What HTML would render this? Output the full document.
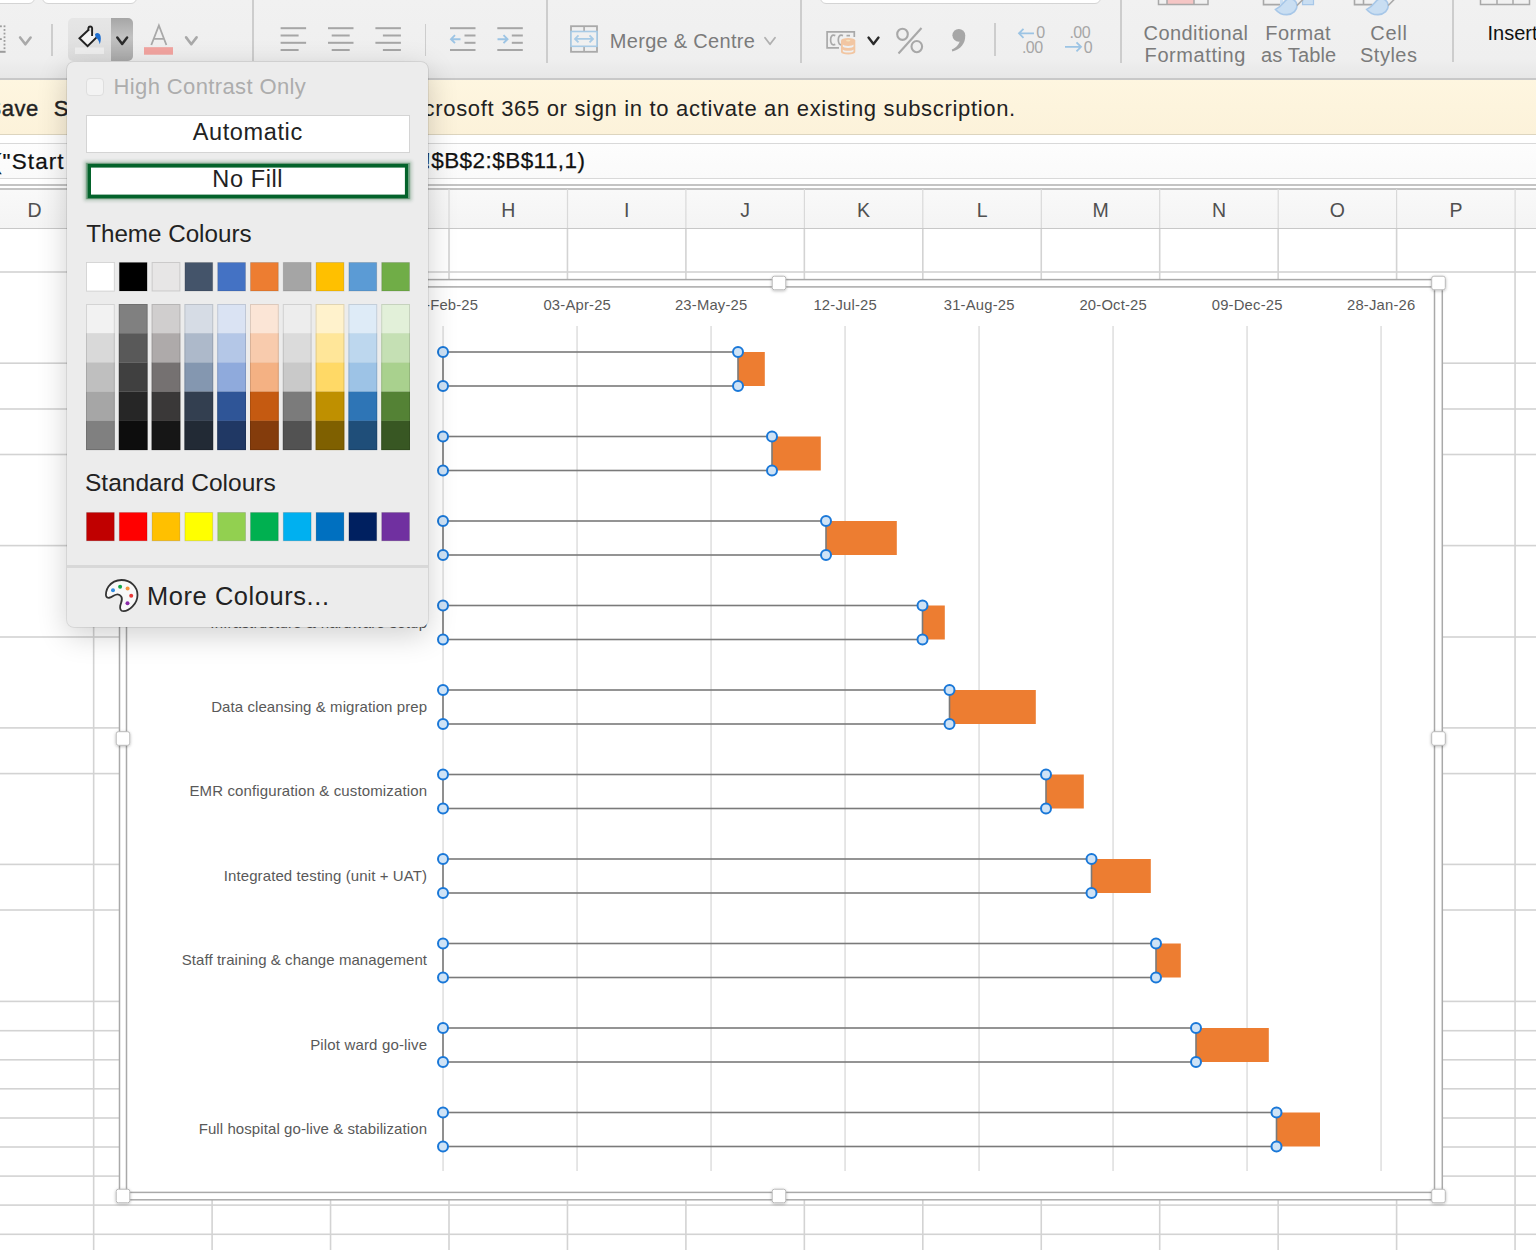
<!DOCTYPE html>
<html><head><meta charset="utf-8">
<style>
*{box-sizing:border-box;margin:0;padding:0}
html,body{width:1536px;height:1250px;overflow:hidden;background:#fff;font-family:"Liberation Sans", sans-serif;position:relative}
.a{position:absolute;white-space:pre}
</style></head><body>
<svg width="1536" height="1250" style="position:absolute;left:0;top:0">
<rect x="92.85" y="229" width="1.6" height="1021" fill="#d3d3d3"/>
<rect x="211.30" y="229" width="1.6" height="1021" fill="#d3d3d3"/>
<rect x="329.75" y="229" width="1.6" height="1021" fill="#d3d3d3"/>
<rect x="448.20" y="229" width="1.6" height="1021" fill="#d3d3d3"/>
<rect x="566.65" y="229" width="1.6" height="1021" fill="#d3d3d3"/>
<rect x="685.10" y="229" width="1.6" height="1021" fill="#d3d3d3"/>
<rect x="803.55" y="229" width="1.6" height="1021" fill="#d3d3d3"/>
<rect x="922.00" y="229" width="1.6" height="1021" fill="#d3d3d3"/>
<rect x="1040.45" y="229" width="1.6" height="1021" fill="#d3d3d3"/>
<rect x="1158.90" y="229" width="1.6" height="1021" fill="#d3d3d3"/>
<rect x="1277.35" y="229" width="1.6" height="1021" fill="#d3d3d3"/>
<rect x="1395.80" y="229" width="1.6" height="1021" fill="#d3d3d3"/>
<rect x="1514.25" y="229" width="1.6" height="1021" fill="#d3d3d3"/>
<rect x="0" y="271.20" width="1536" height="1.6" fill="#d3d3d3"/>
<rect x="0" y="362.40" width="1536" height="1.6" fill="#d3d3d3"/>
<rect x="0" y="408.20" width="1536" height="1.6" fill="#d3d3d3"/>
<rect x="0" y="453.70" width="1536" height="1.6" fill="#d3d3d3"/>
<rect x="0" y="544.80" width="1536" height="1.6" fill="#d3d3d3"/>
<rect x="0" y="636.20" width="1536" height="1.6" fill="#d3d3d3"/>
<rect x="0" y="727.10" width="1536" height="1.6" fill="#d3d3d3"/>
<rect x="0" y="772.80" width="1536" height="1.6" fill="#d3d3d3"/>
<rect x="0" y="863.60" width="1536" height="1.6" fill="#d3d3d3"/>
<rect x="0" y="909.20" width="1536" height="1.6" fill="#d3d3d3"/>
<rect x="0" y="1000.60" width="1536" height="1.6" fill="#d3d3d3"/>
<rect x="0" y="1029.90" width="1536" height="1.6" fill="#d3d3d3"/>
<rect x="0" y="1059.00" width="1536" height="1.6" fill="#d3d3d3"/>
<rect x="0" y="1088.00" width="1536" height="1.6" fill="#d3d3d3"/>
<rect x="0" y="1117.20" width="1536" height="1.6" fill="#d3d3d3"/>
<rect x="0" y="1146.20" width="1536" height="1.6" fill="#d3d3d3"/>
<rect x="0" y="1175.30" width="1536" height="1.6" fill="#d3d3d3"/>
<rect x="0" y="1204.30" width="1536" height="1.6" fill="#d3d3d3"/>
<rect x="0" y="1233.50" width="1536" height="1.6" fill="#d3d3d3"/>
</svg>
<div class="a" style="left:0;top:179px;width:1536px;height:10px;background:#fff;"></div>
<div class="a" style="left:0;top:184px;width:1536px;height:1.5px;background:#c4c4c4"></div>
<div class="a" style="left:0;top:188px;width:1536px;height:1.5px;background:#c4c4c4"></div>
<div class="a" style="left:0;top:189.5px;width:1536px;height:38.5px;background:linear-gradient(#f9f9f9,#f4f4f4)"></div>
<div class="a" style="left:0;top:227.5px;width:1536px;height:1.5px;background:#c8c8c8"></div>
<svg width="1536" height="50" style="position:absolute;left:0;top:189">
<rect x="93.1" y="0" width="1.2" height="39" fill="#d9d9d9"/>
<rect x="211.5" y="0" width="1.2" height="39" fill="#d9d9d9"/>
<rect x="329.9" y="0" width="1.2" height="39" fill="#d9d9d9"/>
<rect x="448.4" y="0" width="1.2" height="39" fill="#d9d9d9"/>
<rect x="566.9" y="0" width="1.2" height="39" fill="#d9d9d9"/>
<rect x="685.3" y="0" width="1.2" height="39" fill="#d9d9d9"/>
<rect x="803.8" y="0" width="1.2" height="39" fill="#d9d9d9"/>
<rect x="922.2" y="0" width="1.2" height="39" fill="#d9d9d9"/>
<rect x="1040.7" y="0" width="1.2" height="39" fill="#d9d9d9"/>
<rect x="1159.1" y="0" width="1.2" height="39" fill="#d9d9d9"/>
<rect x="1277.6" y="0" width="1.2" height="39" fill="#d9d9d9"/>
<rect x="1396.0" y="0" width="1.2" height="39" fill="#d9d9d9"/>
<rect x="1514.5" y="0" width="1.2" height="39" fill="#d9d9d9"/>
</svg>
<div class="a" style="left:4.5px;top:200px;width:60px;text-align:center;font-size:19.5px;line-height:20px;color:#505050">D</div>
<div class="a" style="left:122.9px;top:200px;width:60px;text-align:center;font-size:19.5px;line-height:20px;color:#505050">E</div>
<div class="a" style="left:241.4px;top:200px;width:60px;text-align:center;font-size:19.5px;line-height:20px;color:#505050">F</div>
<div class="a" style="left:359.8px;top:200px;width:60px;text-align:center;font-size:19.5px;line-height:20px;color:#505050">G</div>
<div class="a" style="left:478.2px;top:200px;width:60px;text-align:center;font-size:19.5px;line-height:20px;color:#505050">H</div>
<div class="a" style="left:596.7px;top:200px;width:60px;text-align:center;font-size:19.5px;line-height:20px;color:#505050">I</div>
<div class="a" style="left:715.2px;top:200px;width:60px;text-align:center;font-size:19.5px;line-height:20px;color:#505050">J</div>
<div class="a" style="left:833.6px;top:200px;width:60px;text-align:center;font-size:19.5px;line-height:20px;color:#505050">K</div>
<div class="a" style="left:952.1px;top:200px;width:60px;text-align:center;font-size:19.5px;line-height:20px;color:#505050">L</div>
<div class="a" style="left:1070.5px;top:200px;width:60px;text-align:center;font-size:19.5px;line-height:20px;color:#505050">M</div>
<div class="a" style="left:1189.0px;top:200px;width:60px;text-align:center;font-size:19.5px;line-height:20px;color:#505050">N</div>
<div class="a" style="left:1307.4px;top:200px;width:60px;text-align:center;font-size:19.5px;line-height:20px;color:#505050">O</div>
<div class="a" style="left:1425.9px;top:200px;width:60px;text-align:center;font-size:19.5px;line-height:20px;color:#505050">P</div>
<div class="a" style="left:1544.3px;top:200px;width:60px;text-align:center;font-size:19.5px;line-height:20px;color:#505050">Q</div>
<div class="a" style="left:0;top:135px;width:1536px;height:8px;background:#fff"></div>
<div class="a" style="left:0;top:143px;width:1536px;height:36px;background:linear-gradient(#fdfdfd,#fafafa);border-top:1.3px solid #d9d9d9;border-bottom:1.3px solid #d9d9d9"></div>
<div class="a" style="left:-6.00px;top:150.75px;font-size:22.5px;line-height:22.5px;color:#111;letter-spacing:1.1px;-webkit-text-stroke:0.25px #111">("Start</div>
<div class="a" style="left:411.50px;top:150.15px;font-size:22.5px;line-height:22.5px;color:#111;letter-spacing:0.45px;-webkit-text-stroke:0.25px #111">1!$B$2:$B$11,1)</div>
<div class="a" style="left:0;top:79px;width:1536px;height:56px;background:linear-gradient(#fef6e0,#fcf2da);border-bottom:1.5px solid #ddd5bf"></div>
<div class="a" style="left:-13.50px;top:98.08px;font-size:22px;line-height:22px;color:#222;letter-spacing:0.5px;-webkit-text-stroke:0.4px #222">Save</div>
<div class="a" style="left:53.80px;top:98.08px;font-size:22px;line-height:22px;color:#222;letter-spacing:0.5px;-webkit-text-stroke:0.4px #222">Subscribe</div>
<div class="a" style="left:399.00px;top:98.08px;font-size:22px;line-height:22px;color:#222;letter-spacing:0.68px;">Microsoft 365 or sign in to activate an existing subscription.</div>
<div class="a" style="left:0;top:0;width:1536px;height:79.5px;background:linear-gradient(#f1f1f1 0%,#efefef 75%,#e7e7e7 100%);border-bottom:2px solid #c8c8c8"></div>
<div class="a" style="left:-20px;top:-30px;width:55px;height:33.5px;background:#fff;border:1.2px solid #d4d4d4;border-radius:6px"></div>
<div class="a" style="left:42px;top:-30px;width:95px;height:33.5px;background:#fff;border:1.2px solid #d4d4d4;border-radius:6px"></div>
<div class="a" style="left:820px;top:-30px;width:281px;height:33.5px;background:#fff;border:1.2px solid #d4d4d4;border-radius:6px"></div>
<div class="a" style="left:51.4px;top:24px;width:1.3px;height:32px;background:#cdcdcd"></div>
<div class="a" style="left:252.4px;top:0px;width:1.3px;height:61px;background:#cdcdcd"></div>
<div class="a" style="left:424.9px;top:24px;width:1.3px;height:32px;background:#cdcdcd"></div>
<div class="a" style="left:546.4px;top:0px;width:1.3px;height:63px;background:#cdcdcd"></div>
<div class="a" style="left:800.4px;top:0px;width:1.3px;height:63px;background:#cdcdcd"></div>
<div class="a" style="left:994.4px;top:23px;width:1.3px;height:33px;background:#cdcdcd"></div>
<div class="a" style="left:1120.4px;top:0px;width:1.3px;height:63px;background:#cdcdcd"></div>
<div class="a" style="left:1452.4px;top:0px;width:1.3px;height:62px;background:#cdcdcd"></div>
<svg width="1536" height="79" style="position:absolute;left:0;top:0">
<g fill="#9c9c9c"><rect x="3.6" y="25.40" width="1.8" height="1.8"/><rect x="3.6" y="29.05" width="1.8" height="1.8"/><rect x="3.6" y="32.70" width="1.8" height="1.8"/><rect x="3.6" y="36.35" width="1.8" height="1.8"/><rect x="3.6" y="40.00" width="1.8" height="1.8"/><rect x="3.6" y="43.65" width="1.8" height="1.8"/><rect x="3.6" y="47.30" width="1.8" height="1.8"/><rect x="0" y="50.8" width="5.6" height="2"/><rect x="0" y="25.4" width="1.8" height="1.8"/><rect x="0" y="38.2" width="1.8" height="1.8"/></g>
<polyline points="20.1,37.5 25.4,44.3 30.6,37.5" fill="none" stroke="#a9a9a9" stroke-width="2.6" stroke-linecap="round" stroke-linejoin="round"/>
<polyline points="186.1,37.4 191.3,44.2 196.6,37.4" fill="none" stroke="#a9a9a9" stroke-width="2.6" stroke-linecap="round" stroke-linejoin="round"/>
<polyline points="765.0,37.8 770.0,44.2 775.0,37.8" fill="none" stroke="#b0b0b0" stroke-width="1.8" stroke-linecap="round" stroke-linejoin="round"/>
<polyline points="868.5,37.6 873.5,44.1 878.5,37.6" fill="none" stroke="#2a2a2a" stroke-width="2.4" stroke-linecap="round" stroke-linejoin="round"/>
<defs><linearGradient id="gb" x1="0" y1="0" x2="0" y2="1"><stop offset="0" stop-color="#a6a6a6"/><stop offset="0.45" stop-color="#c2c2c2"/><stop offset="1" stop-color="#a9a9a9"/></linearGradient><linearGradient id="gl" x1="0" y1="0" x2="0" y2="1"><stop offset="0" stop-color="#e6e6e6"/><stop offset="1" stop-color="#dddddd"/></linearGradient></defs>
<path d="M73,18 H111 V61 H73 A5,5 0 0 1 68,56 V23 A5,5 0 0 1 73,18Z" fill="url(#gl)"/>
<path d="M111,18 H128 A5,5 0 0 1 133,23 V56 A5,5 0 0 1 128,61 H111Z" fill="url(#gb)"/>
<rect x="75" y="47.5" width="29" height="6.5" fill="#eeeeee"/>
<path d="M88.4,30 L79.5,38.2 L87.6,46.2 L97.3,36.6" fill="#f4f4f4" stroke="#222" stroke-width="2" stroke-linejoin="miter"/>
<path d="M88.4,31 V28 A1.9,1.9 0 0 1 92.1,28 V36" fill="none" stroke="#222" stroke-width="1.9"/>
<path d="M95,34.2 C96.5,32.3 99.8,32.6 100.6,36.2 C101.2,39 100.6,41.8 99.7,44.3 C99.2,41.5 98.2,39 95.6,37.2 Z" fill="#1f6fd0"/>
<polyline points="117.3,37.6 122.2,43.9 127.1,37.6" fill="none" stroke="#2b2b2b" stroke-width="2.5" stroke-linecap="round" stroke-linejoin="round"/>
<path d="M151.3,45 L158.9,25.5 L166.4,45 M153.8,38.8 H164" fill="none" stroke="#a8a8a8" stroke-width="1.8"/>
<rect x="144" y="47.2" width="29" height="7.5" fill="#f2a4a0"/>
<rect x="280.6" y="27.2" width="25.5" height="2" fill="#a6a6a6"/><rect x="280.6" y="34.5" width="18" height="2" fill="#a6a6a6"/><rect x="280.6" y="41.8" width="25.5" height="2" fill="#a6a6a6"/><rect x="280.6" y="49.0" width="18" height="2" fill="#a6a6a6"/>
<rect x="328.0" y="27.2" width="25.5" height="2" fill="#a6a6a6"/><rect x="331.7" y="34.5" width="18" height="2" fill="#a6a6a6"/><rect x="328.0" y="41.8" width="25.5" height="2" fill="#a6a6a6"/><rect x="331.7" y="49.0" width="18" height="2" fill="#a6a6a6"/>
<rect x="375.4" y="27.2" width="25.5" height="2" fill="#a6a6a6"/><rect x="382.9" y="34.5" width="18" height="2" fill="#a6a6a6"/><rect x="375.4" y="41.8" width="25.5" height="2" fill="#a6a6a6"/><rect x="382.9" y="49.0" width="18" height="2" fill="#a6a6a6"/>
<rect x="450.0" y="27.2" width="25.5" height="2" fill="#a6a6a6"/><rect x="464.5" y="34.5" width="11" height="2" fill="#a6a6a6"/><rect x="464.5" y="41.8" width="11" height="2" fill="#a6a6a6"/><rect x="450.0" y="49.0" width="25.5" height="2" fill="#a6a6a6"/>
<path d="M460.5,39.2 H451 M455,35.2 L451,39.2 L455,43.2" fill="none" stroke="#9cc4e4" stroke-width="1.9"/>
<rect x="497.3" y="27.2" width="25.5" height="2" fill="#a6a6a6"/><rect x="511.8" y="34.5" width="11" height="2" fill="#a6a6a6"/><rect x="511.8" y="41.8" width="11" height="2" fill="#a6a6a6"/><rect x="497.3" y="49.0" width="25.5" height="2" fill="#a6a6a6"/>
<path d="M497.5,39.2 H507.5 M503.5,35.2 L507.5,39.2 L503.5,43.2" fill="none" stroke="#9cc4e4" stroke-width="1.9"/>
<rect x="571" y="26.2" width="26" height="25.6" fill="none" stroke="#a9a9a9" stroke-width="1.8"/>
<rect x="583.3" y="26" width="1.6" height="26" fill="#a9a9a9"/>
<rect x="571" y="31.5" width="26" height="14.8" fill="#f0f0f0" stroke="#a8cbe6" stroke-width="1.6"/>
<path d="M575,38.9 H593 M578.5,35.4 L575,38.9 L578.5,42.4 M589.5,35.4 L593,38.9 L589.5,42.4" fill="none" stroke="#a8cbe6" stroke-width="1.8"/>
<path d="M854.3,37 V31.9 H827.1 V47.9 H839" fill="none" stroke="#a9a9a9" stroke-width="1.7"/>
<path d="M835.3,35.6 C831.5,34 830.6,37.5 830.6,40 C830.6,42.5 831.5,46 835.3,44.4 M843,35.6 C839.2,34 838.3,37.5 838.3,40 C838.3,42.5 839.2,46 843,44.4 M846.5,35.6 H850" fill="none" stroke="#a9a9a9" stroke-width="1.7"/>
<path d="M841,40.6 A7.15,2.6 0 0 1 855.3,40.6 V52 A7.15,2.6 0 0 1 841,52 Z" fill="#f2c6a2"/>
<path d="M842.8,44.6 A5.4,1.5 0 0 0 853.5,44.6 V46.6 A5.4,1.5 0 0 1 842.8,46.6 Z M842.8,49.4 A5.4,1.5 0 0 0 853.5,49.4 V51.2 A5.4,1.5 0 0 1 842.8,51.2 Z" fill="#eef0f2"/>
<ellipse cx="848.2" cy="40.6" rx="2.2" ry="0.9" fill="#f5e2bd"/>
<g fill="none" stroke="#a8a8a8" stroke-width="2.1"><ellipse cx="902.5" cy="34.3" rx="5.3" ry="5.6"/><ellipse cx="916.8" cy="46.6" rx="5.3" ry="5.6"/><path d="M921.5,28 L898.5,53.5"/></g>
<circle cx="958.8" cy="35.3" r="6.4" fill="#a6a6a6"/><path d="M965.2,35.8 C965.5,43.5 960.5,49.5 952.3,51.6 L951.8,49.6 C956.5,47.5 959.5,44 959.8,40.5 Z" fill="#a6a6a6"/>
<text x="1036.3" y="37.8" font-family="Liberation Sans" font-size="16" fill="#a6a6a6">0</text>
<text x="1022" y="52.8" font-family="Liberation Sans" font-size="16" fill="#a6a6a6" letter-spacing="-0.6">.00</text>
<path d="M1034,33.3 H1019 M1023.5,28.8 L1019,33.3 L1023.5,37.8" fill="none" stroke="#9cc4e4" stroke-width="1.8"/>
<text x="1069.5" y="37.8" font-family="Liberation Sans" font-size="16" fill="#a6a6a6" letter-spacing="-0.6">.00</text>
<text x="1083.8" y="52.8" font-family="Liberation Sans" font-size="16" fill="#a6a6a6">0</text>
<path d="M1065,46.8 H1081 M1076.5,42.3 L1081,46.8 L1076.5,51.3" fill="none" stroke="#9cc4e4" stroke-width="1.8"/>
<rect x="1167" y="-10" width="27" height="14.6" fill="#f5c6c5"/><path d="M1158.5,-10 V4.6 H1208 V-10 M1194,-10 V4.6 M1167,-10 V4.6" fill="none" stroke="#a8a8a8" stroke-width="1.5"/>
<path d="M1263.5,-10 V4.6 H1280" fill="none" stroke="#a8a8a8" stroke-width="1.6"/><path d="M1303,-10 L1313.5,-10 L1313.5,4.6 L1302.5,4.6 Z" fill="#c9def2" stroke="#a7c7e8" stroke-width="1.2"/><path d="M1280,-10 H1283 V4.6 H1280Z" fill="#c9def2"/>
<path d="M1275.5,9.4 C1279,13.5 1283,14.8 1287,14.6 C1293,14.3 1297.5,10 1297,5 C1296.5,0.5 1292,-2 1288,-1 C1284,0 1283,6 1275.5,9.4 Z" fill="#c9def2" stroke="#a7c7e8" stroke-width="1.6"/><path d="M1297,5.5 L1303,-0.5" stroke="#a8a8a8" stroke-width="1.6"/>
<path d="M1354.5,-10 V4.6 H1372.5 M1363.5,-10 V4.6" fill="none" stroke="#a8a8a8" stroke-width="1.6"/>
<g transform="translate(91.2,0)"><path d="M1275.5,9.4 C1279,13.5 1283,14.8 1287,14.6 C1293,14.3 1297.5,10 1297,5 C1296.5,0.5 1292,-2 1288,-1 C1284,0 1283,6 1275.5,9.4 Z" fill="#c9def2" stroke="#a7c7e8" stroke-width="1.6"/><path d="M1297,5.5 L1303,-0.5" stroke="#a8a8a8" stroke-width="1.6"/></g>
<path d="M1480.5,-10 V4.6 H1529.5 V-10 M1497,-10 V4.6 M1513,-10 V4.6" fill="none" stroke="#a8a8a8" stroke-width="1.5"/>
</svg>
<div class="a" style="left:609.80px;top:30.57px;font-size:20px;line-height:20px;color:#7b7b7b;letter-spacing:0.3px;">Merge &amp; Centre</div>
<div class="a" style="left:1143.50px;top:23.07px;font-size:20px;line-height:20px;color:#7b7b7b;letter-spacing:0.44px;">Conditional</div>
<div class="a" style="left:1144.60px;top:44.97px;font-size:20px;line-height:20px;color:#7b7b7b;letter-spacing:0.58px;">Formatting</div>
<div class="a" style="left:1265.30px;top:23.07px;font-size:20px;line-height:20px;color:#7b7b7b;letter-spacing:0.4px;">Format</div>
<div class="a" style="left:1261.00px;top:44.97px;font-size:20px;line-height:20px;color:#7b7b7b;letter-spacing:0.15px;">as Table</div>
<div class="a" style="left:1370.30px;top:23.07px;font-size:20px;line-height:20px;color:#7b7b7b;letter-spacing:0.7px;">Cell</div>
<div class="a" style="left:1360.00px;top:44.97px;font-size:20px;line-height:20px;color:#7b7b7b;letter-spacing:0.5px;">Styles</div>
<div class="a" style="left:1487.50px;top:23.07px;font-size:20px;line-height:20px;color:#111;">Insert</div>
<svg width="1536" height="1250" style="position:absolute;left:0;top:0"><defs><filter id="hs" x="-50%" y="-50%" width="200%" height="200%"><feDropShadow dx="0" dy="0.8" stdDeviation="1.4" flood-color="#000" flood-opacity="0.28"/></filter></defs>
<rect x="119.5" y="279.6" width="1322.8" height="920.2" fill="#fff" stroke="#a9a9a9" stroke-width="1.5"/>
<rect x="126.5" y="286.9" width="1308" height="905.5" fill="#fff" stroke="#a9a9a9" stroke-width="1.5"/>
<rect x="442.4" y="326" width="1.3" height="845" fill="#d9d9d9"/>
<rect x="576.4" y="326" width="1.3" height="845" fill="#d9d9d9"/>
<rect x="710.4" y="326" width="1.3" height="845" fill="#d9d9d9"/>
<rect x="844.4" y="326" width="1.3" height="845" fill="#d9d9d9"/>
<rect x="978.4" y="326" width="1.3" height="845" fill="#d9d9d9"/>
<rect x="1112.4" y="326" width="1.3" height="845" fill="#d9d9d9"/>
<rect x="1246.4" y="326" width="1.3" height="845" fill="#d9d9d9"/>
<rect x="1380.4" y="326" width="1.3" height="845" fill="#d9d9d9"/>
<text x="443.2" y="310.3" text-anchor="middle" font-family="Liberation Sans" font-size="14.8" fill="#595959" letter-spacing="0.2">12-Feb-25</text>
<text x="577.2" y="310.3" text-anchor="middle" font-family="Liberation Sans" font-size="14.8" fill="#595959" letter-spacing="0.2">03-Apr-25</text>
<text x="711.2" y="310.3" text-anchor="middle" font-family="Liberation Sans" font-size="14.8" fill="#595959" letter-spacing="0.2">23-May-25</text>
<text x="845.2" y="310.3" text-anchor="middle" font-family="Liberation Sans" font-size="14.8" fill="#595959" letter-spacing="0.2">12-Jul-25</text>
<text x="979.2" y="310.3" text-anchor="middle" font-family="Liberation Sans" font-size="14.8" fill="#595959" letter-spacing="0.2">31-Aug-25</text>
<text x="1113.2" y="310.3" text-anchor="middle" font-family="Liberation Sans" font-size="14.8" fill="#595959" letter-spacing="0.2">20-Oct-25</text>
<text x="1247.2" y="310.3" text-anchor="middle" font-family="Liberation Sans" font-size="14.8" fill="#595959" letter-spacing="0.2">09-Dec-25</text>
<text x="1381.2" y="310.3" text-anchor="middle" font-family="Liberation Sans" font-size="14.8" fill="#595959" letter-spacing="0.2">28-Jan-26</text>
<rect x="738.0" y="352.0" width="26.8" height="34" fill="#ed7d31"/>
<rect x="443" y="352.0" width="295.0" height="34" fill="none" stroke="#7a7a7a" stroke-width="1.6"/>
<circle cx="443.0" cy="352.0" r="5" fill="#cfe3f6" stroke="#1a78d8" stroke-width="2"/>
<circle cx="738.0" cy="352.0" r="5" fill="#cfe3f6" stroke="#1a78d8" stroke-width="2"/>
<circle cx="443.0" cy="386.0" r="5" fill="#cfe3f6" stroke="#1a78d8" stroke-width="2"/>
<circle cx="738.0" cy="386.0" r="5" fill="#cfe3f6" stroke="#1a78d8" stroke-width="2"/>
<text x="427.1" y="373.6" text-anchor="end" font-family="Liberation Sans" font-size="15" fill="#595959" letter-spacing="0.1">Scope definition &amp; requirements</text>
<rect x="772.0" y="436.5" width="48.8" height="34" fill="#ed7d31"/>
<rect x="443" y="436.5" width="329.0" height="34" fill="none" stroke="#7a7a7a" stroke-width="1.6"/>
<circle cx="443.0" cy="436.5" r="5" fill="#cfe3f6" stroke="#1a78d8" stroke-width="2"/>
<circle cx="772.0" cy="436.5" r="5" fill="#cfe3f6" stroke="#1a78d8" stroke-width="2"/>
<circle cx="443.0" cy="470.5" r="5" fill="#cfe3f6" stroke="#1a78d8" stroke-width="2"/>
<circle cx="772.0" cy="470.5" r="5" fill="#cfe3f6" stroke="#1a78d8" stroke-width="2"/>
<text x="427.1" y="458.1" text-anchor="end" font-family="Liberation Sans" font-size="15" fill="#595959" letter-spacing="0.1">Vendor selection &amp; contracting</text>
<rect x="826.0" y="521.0" width="70.8" height="34" fill="#ed7d31"/>
<rect x="443" y="521.0" width="383.0" height="34" fill="none" stroke="#7a7a7a" stroke-width="1.6"/>
<circle cx="443.0" cy="521.0" r="5" fill="#cfe3f6" stroke="#1a78d8" stroke-width="2"/>
<circle cx="826.0" cy="521.0" r="5" fill="#cfe3f6" stroke="#1a78d8" stroke-width="2"/>
<circle cx="443.0" cy="555.0" r="5" fill="#cfe3f6" stroke="#1a78d8" stroke-width="2"/>
<circle cx="826.0" cy="555.0" r="5" fill="#cfe3f6" stroke="#1a78d8" stroke-width="2"/>
<text x="427.1" y="542.6" text-anchor="end" font-family="Liberation Sans" font-size="15" fill="#595959" letter-spacing="0.1">Project planning &amp; governance</text>
<rect x="922.5" y="605.5" width="22.3" height="34" fill="#ed7d31"/>
<rect x="443" y="605.5" width="479.5" height="34" fill="none" stroke="#7a7a7a" stroke-width="1.6"/>
<circle cx="443.0" cy="605.5" r="5" fill="#cfe3f6" stroke="#1a78d8" stroke-width="2"/>
<circle cx="922.5" cy="605.5" r="5" fill="#cfe3f6" stroke="#1a78d8" stroke-width="2"/>
<circle cx="443.0" cy="639.5" r="5" fill="#cfe3f6" stroke="#1a78d8" stroke-width="2"/>
<circle cx="922.5" cy="639.5" r="5" fill="#cfe3f6" stroke="#1a78d8" stroke-width="2"/>
<text x="427.22" y="628.4" text-anchor="end" font-family="Liberation Sans" font-size="15" fill="#595959" letter-spacing="0.22">Infrastructure &amp; hardware setup</text>
<rect x="949.5" y="690.0" width="86.3" height="34" fill="#ed7d31"/>
<rect x="443" y="690.0" width="506.5" height="34" fill="none" stroke="#7a7a7a" stroke-width="1.6"/>
<circle cx="443.0" cy="690.0" r="5" fill="#cfe3f6" stroke="#1a78d8" stroke-width="2"/>
<circle cx="949.5" cy="690.0" r="5" fill="#cfe3f6" stroke="#1a78d8" stroke-width="2"/>
<circle cx="443.0" cy="724.0" r="5" fill="#cfe3f6" stroke="#1a78d8" stroke-width="2"/>
<circle cx="949.5" cy="724.0" r="5" fill="#cfe3f6" stroke="#1a78d8" stroke-width="2"/>
<text x="427.08" y="711.6" text-anchor="end" font-family="Liberation Sans" font-size="15" fill="#595959" letter-spacing="0.08">Data cleansing &amp; migration prep</text>
<rect x="1046.0" y="774.5" width="37.8" height="34" fill="#ed7d31"/>
<rect x="443" y="774.5" width="603.0" height="34" fill="none" stroke="#7a7a7a" stroke-width="1.6"/>
<circle cx="443.0" cy="774.5" r="5" fill="#cfe3f6" stroke="#1a78d8" stroke-width="2"/>
<circle cx="1046.0" cy="774.5" r="5" fill="#cfe3f6" stroke="#1a78d8" stroke-width="2"/>
<circle cx="443.0" cy="808.5" r="5" fill="#cfe3f6" stroke="#1a78d8" stroke-width="2"/>
<circle cx="1046.0" cy="808.5" r="5" fill="#cfe3f6" stroke="#1a78d8" stroke-width="2"/>
<text x="427.13" y="796.1" text-anchor="end" font-family="Liberation Sans" font-size="15" fill="#595959" letter-spacing="0.13">EMR configuration &amp; customization</text>
<rect x="1091.5" y="859.0" width="59.3" height="34" fill="#ed7d31"/>
<rect x="443" y="859.0" width="648.5" height="34" fill="none" stroke="#7a7a7a" stroke-width="1.6"/>
<circle cx="443.0" cy="859.0" r="5" fill="#cfe3f6" stroke="#1a78d8" stroke-width="2"/>
<circle cx="1091.5" cy="859.0" r="5" fill="#cfe3f6" stroke="#1a78d8" stroke-width="2"/>
<circle cx="443.0" cy="893.0" r="5" fill="#cfe3f6" stroke="#1a78d8" stroke-width="2"/>
<circle cx="1091.5" cy="893.0" r="5" fill="#cfe3f6" stroke="#1a78d8" stroke-width="2"/>
<text x="427.1" y="880.6" text-anchor="end" font-family="Liberation Sans" font-size="15" fill="#595959" letter-spacing="0.1">Integrated testing (unit + UAT)</text>
<rect x="1156.0" y="943.5" width="24.8" height="34" fill="#ed7d31"/>
<rect x="443" y="943.5" width="713.0" height="34" fill="none" stroke="#7a7a7a" stroke-width="1.6"/>
<circle cx="443.0" cy="943.5" r="5" fill="#cfe3f6" stroke="#1a78d8" stroke-width="2"/>
<circle cx="1156.0" cy="943.5" r="5" fill="#cfe3f6" stroke="#1a78d8" stroke-width="2"/>
<circle cx="443.0" cy="977.5" r="5" fill="#cfe3f6" stroke="#1a78d8" stroke-width="2"/>
<circle cx="1156.0" cy="977.5" r="5" fill="#cfe3f6" stroke="#1a78d8" stroke-width="2"/>
<text x="427.06" y="965.1" text-anchor="end" font-family="Liberation Sans" font-size="15" fill="#595959" letter-spacing="0.06">Staff training &amp; change management</text>
<rect x="1196.0" y="1028.0" width="72.8" height="34" fill="#ed7d31"/>
<rect x="443" y="1028.0" width="753.0" height="34" fill="none" stroke="#7a7a7a" stroke-width="1.6"/>
<circle cx="443.0" cy="1028.0" r="5" fill="#cfe3f6" stroke="#1a78d8" stroke-width="2"/>
<circle cx="1196.0" cy="1028.0" r="5" fill="#cfe3f6" stroke="#1a78d8" stroke-width="2"/>
<circle cx="443.0" cy="1062.0" r="5" fill="#cfe3f6" stroke="#1a78d8" stroke-width="2"/>
<circle cx="1196.0" cy="1062.0" r="5" fill="#cfe3f6" stroke="#1a78d8" stroke-width="2"/>
<text x="427.15" y="1049.6" text-anchor="end" font-family="Liberation Sans" font-size="15" fill="#595959" letter-spacing="0.15">Pilot ward go-live</text>
<rect x="1276.5" y="1112.5" width="43.5" height="34" fill="#ed7d31"/>
<rect x="443" y="1112.5" width="833.5" height="34" fill="none" stroke="#7a7a7a" stroke-width="1.6"/>
<circle cx="443.0" cy="1112.5" r="5" fill="#cfe3f6" stroke="#1a78d8" stroke-width="2"/>
<circle cx="1276.5" cy="1112.5" r="5" fill="#cfe3f6" stroke="#1a78d8" stroke-width="2"/>
<circle cx="443.0" cy="1146.5" r="5" fill="#cfe3f6" stroke="#1a78d8" stroke-width="2"/>
<circle cx="1276.5" cy="1146.5" r="5" fill="#cfe3f6" stroke="#1a78d8" stroke-width="2"/>
<text x="427.09" y="1134.1" text-anchor="end" font-family="Liberation Sans" font-size="15" fill="#595959" letter-spacing="0.09">Full hospital go-live &amp; stabilization</text>
<rect x="116.2" y="276.2" width="13.6" height="13.6" rx="2.2" fill="#fff" stroke="#b9b9b9" stroke-width="1" filter="url(#hs)"/>
<rect x="772.2" y="276.2" width="13.6" height="13.6" rx="2.2" fill="#fff" stroke="#b9b9b9" stroke-width="1" filter="url(#hs)"/>
<rect x="1431.7" y="276.2" width="13.6" height="13.6" rx="2.2" fill="#fff" stroke="#b9b9b9" stroke-width="1" filter="url(#hs)"/>
<rect x="116.2" y="731.7" width="13.6" height="13.6" rx="2.2" fill="#fff" stroke="#b9b9b9" stroke-width="1" filter="url(#hs)"/>
<rect x="1431.7" y="731.7" width="13.6" height="13.6" rx="2.2" fill="#fff" stroke="#b9b9b9" stroke-width="1" filter="url(#hs)"/>
<rect x="116.2" y="1189.2" width="13.6" height="13.6" rx="2.2" fill="#fff" stroke="#b9b9b9" stroke-width="1" filter="url(#hs)"/>
<rect x="772.2" y="1189.2" width="13.6" height="13.6" rx="2.2" fill="#fff" stroke="#b9b9b9" stroke-width="1" filter="url(#hs)"/>
<rect x="1431.7" y="1189.2" width="13.6" height="13.6" rx="2.2" fill="#fff" stroke="#b9b9b9" stroke-width="1" filter="url(#hs)"/>
</svg>
<div class="a" style="left:67px;top:62px;width:361px;height:564.5px;background:#ececec;border-radius:7px;box-shadow:0 8px 30px rgba(0,0,0,0.19),0 0 0 0.8px rgba(0,0,0,0.10)"></div>
<div class="a" style="left:86px;top:78px;width:17.6px;height:18.4px;border-radius:4px;background:#f3f3f3;border:1px solid #dedede"></div>
<div class="a" style="left:113.50px;top:76.48px;font-size:22px;line-height:22px;color:#adadad;letter-spacing:0.38px;">High Contrast Only</div>
<div class="a" style="left:86px;top:115px;width:323.5px;height:37.8px;background:#fff;border:1.5px solid #d4d4d4"></div>
<div class="a" style="left:86.00px;top:121.01px;font-size:23.5px;line-height:23.5px;color:#222;letter-spacing:0.64px;width:323.5px;text-align:center;">Automatic</div>
<div class="a" style="left:87.3px;top:163.9px;width:321.3px;height:34.4px;background:#fff;box-shadow:0 0 0 1.2px rgba(70,130,90,0.55),0 0 3px 3px rgba(60,120,80,0.28)"></div>
<svg width="340" height="50" style="position:absolute;left:80px;top:155px"><rect x="9.15" y="10.75" width="317.6" height="30.7" fill="none" stroke="#04632b" stroke-width="3.7"/></svg>
<div class="a" style="left:86.00px;top:168.41px;font-size:23.5px;line-height:23.5px;color:#222;letter-spacing:0.6px;width:323.5px;text-align:center;">No Fill</div>
<div class="a" style="left:86.20px;top:221.71px;font-size:24.2px;line-height:24.2px;color:#222;">Theme Colours</div>
<svg width="361" height="300" style="position:absolute;left:67px;top:250px">
<rect x="19.5" y="12.5" width="27.8" height="28.5" fill="#FFFFFF" stroke="rgba(0,0,0,0.13)" stroke-width="1"/>
<rect x="52.3" y="12.5" width="27.8" height="28.5" fill="#000000" stroke="rgba(0,0,0,0.13)" stroke-width="1"/>
<rect x="85.1" y="12.5" width="27.8" height="28.5" fill="#E7E6E6" stroke="rgba(0,0,0,0.13)" stroke-width="1"/>
<rect x="117.9" y="12.5" width="27.8" height="28.5" fill="#44546A" stroke="rgba(0,0,0,0.13)" stroke-width="1"/>
<rect x="150.7" y="12.5" width="27.8" height="28.5" fill="#4472C4" stroke="rgba(0,0,0,0.13)" stroke-width="1"/>
<rect x="183.5" y="12.5" width="27.8" height="28.5" fill="#ED7D31" stroke="rgba(0,0,0,0.13)" stroke-width="1"/>
<rect x="216.3" y="12.5" width="27.8" height="28.5" fill="#A5A5A5" stroke="rgba(0,0,0,0.13)" stroke-width="1"/>
<rect x="249.1" y="12.5" width="27.8" height="28.5" fill="#FFC000" stroke="rgba(0,0,0,0.13)" stroke-width="1"/>
<rect x="281.9" y="12.5" width="27.8" height="28.5" fill="#5B9BD5" stroke="rgba(0,0,0,0.13)" stroke-width="1"/>
<rect x="314.7" y="12.5" width="27.8" height="28.5" fill="#70AD47" stroke="rgba(0,0,0,0.13)" stroke-width="1"/>
<rect x="19.0" y="54.0" width="28.8" height="29.3" fill="#F2F2F2"/>
<rect x="19.0" y="83.2" width="28.8" height="29.3" fill="#D9D9D9"/>
<rect x="19.0" y="112.4" width="28.8" height="29.3" fill="#BFBFBF"/>
<rect x="19.0" y="141.6" width="28.8" height="29.3" fill="#A6A6A6"/>
<rect x="19.0" y="170.8" width="28.8" height="29.3" fill="#808080"/>
<rect x="19.5" y="54.5" width="27.8" height="145" fill="none" stroke="rgba(0,0,0,0.12)" stroke-width="1"/>
<rect x="51.8" y="54.0" width="28.8" height="29.3" fill="#808080"/>
<rect x="51.8" y="83.2" width="28.8" height="29.3" fill="#595959"/>
<rect x="51.8" y="112.4" width="28.8" height="29.3" fill="#404040"/>
<rect x="51.8" y="141.6" width="28.8" height="29.3" fill="#262626"/>
<rect x="51.8" y="170.8" width="28.8" height="29.3" fill="#0D0D0D"/>
<rect x="52.3" y="54.5" width="27.8" height="145" fill="none" stroke="rgba(0,0,0,0.12)" stroke-width="1"/>
<rect x="84.6" y="54.0" width="28.8" height="29.3" fill="#D0CECE"/>
<rect x="84.6" y="83.2" width="28.8" height="29.3" fill="#AEAAAA"/>
<rect x="84.6" y="112.4" width="28.8" height="29.3" fill="#757171"/>
<rect x="84.6" y="141.6" width="28.8" height="29.3" fill="#3A3838"/>
<rect x="84.6" y="170.8" width="28.8" height="29.3" fill="#161616"/>
<rect x="85.1" y="54.5" width="27.8" height="145" fill="none" stroke="rgba(0,0,0,0.12)" stroke-width="1"/>
<rect x="117.4" y="54.0" width="28.8" height="29.3" fill="#D6DCE5"/>
<rect x="117.4" y="83.2" width="28.8" height="29.3" fill="#ADB9CA"/>
<rect x="117.4" y="112.4" width="28.8" height="29.3" fill="#8497B0"/>
<rect x="117.4" y="141.6" width="28.8" height="29.3" fill="#333F50"/>
<rect x="117.4" y="170.8" width="28.8" height="29.3" fill="#222A35"/>
<rect x="117.9" y="54.5" width="27.8" height="145" fill="none" stroke="rgba(0,0,0,0.12)" stroke-width="1"/>
<rect x="150.2" y="54.0" width="28.8" height="29.3" fill="#DAE3F3"/>
<rect x="150.2" y="83.2" width="28.8" height="29.3" fill="#B4C7E7"/>
<rect x="150.2" y="112.4" width="28.8" height="29.3" fill="#8FAADC"/>
<rect x="150.2" y="141.6" width="28.8" height="29.3" fill="#2F5597"/>
<rect x="150.2" y="170.8" width="28.8" height="29.3" fill="#203864"/>
<rect x="150.7" y="54.5" width="27.8" height="145" fill="none" stroke="rgba(0,0,0,0.12)" stroke-width="1"/>
<rect x="183.0" y="54.0" width="28.8" height="29.3" fill="#FBE5D6"/>
<rect x="183.0" y="83.2" width="28.8" height="29.3" fill="#F8CBAD"/>
<rect x="183.0" y="112.4" width="28.8" height="29.3" fill="#F4B183"/>
<rect x="183.0" y="141.6" width="28.8" height="29.3" fill="#C55A11"/>
<rect x="183.0" y="170.8" width="28.8" height="29.3" fill="#843C0C"/>
<rect x="183.5" y="54.5" width="27.8" height="145" fill="none" stroke="rgba(0,0,0,0.12)" stroke-width="1"/>
<rect x="215.8" y="54.0" width="28.8" height="29.3" fill="#EDEDED"/>
<rect x="215.8" y="83.2" width="28.8" height="29.3" fill="#DBDBDB"/>
<rect x="215.8" y="112.4" width="28.8" height="29.3" fill="#C9C9C9"/>
<rect x="215.8" y="141.6" width="28.8" height="29.3" fill="#7B7B7B"/>
<rect x="215.8" y="170.8" width="28.8" height="29.3" fill="#525252"/>
<rect x="216.3" y="54.5" width="27.8" height="145" fill="none" stroke="rgba(0,0,0,0.12)" stroke-width="1"/>
<rect x="248.6" y="54.0" width="28.8" height="29.3" fill="#FFF2CC"/>
<rect x="248.6" y="83.2" width="28.8" height="29.3" fill="#FFE699"/>
<rect x="248.6" y="112.4" width="28.8" height="29.3" fill="#FFD966"/>
<rect x="248.6" y="141.6" width="28.8" height="29.3" fill="#BF9000"/>
<rect x="248.6" y="170.8" width="28.8" height="29.3" fill="#7F6000"/>
<rect x="249.1" y="54.5" width="27.8" height="145" fill="none" stroke="rgba(0,0,0,0.12)" stroke-width="1"/>
<rect x="281.4" y="54.0" width="28.8" height="29.3" fill="#DEEBF7"/>
<rect x="281.4" y="83.2" width="28.8" height="29.3" fill="#BDD7EE"/>
<rect x="281.4" y="112.4" width="28.8" height="29.3" fill="#9DC3E6"/>
<rect x="281.4" y="141.6" width="28.8" height="29.3" fill="#2E75B6"/>
<rect x="281.4" y="170.8" width="28.8" height="29.3" fill="#1F4E79"/>
<rect x="281.9" y="54.5" width="27.8" height="145" fill="none" stroke="rgba(0,0,0,0.12)" stroke-width="1"/>
<rect x="314.2" y="54.0" width="28.8" height="29.3" fill="#E2F0D9"/>
<rect x="314.2" y="83.2" width="28.8" height="29.3" fill="#C5E0B4"/>
<rect x="314.2" y="112.4" width="28.8" height="29.3" fill="#A9D18E"/>
<rect x="314.2" y="141.6" width="28.8" height="29.3" fill="#548235"/>
<rect x="314.2" y="170.8" width="28.8" height="29.3" fill="#385723"/>
<rect x="314.7" y="54.5" width="27.8" height="145" fill="none" stroke="rgba(0,0,0,0.12)" stroke-width="1"/>
<rect x="19.5" y="262.5" width="27.8" height="28.3" fill="#C00000" stroke="rgba(0,0,0,0.13)" stroke-width="1"/>
<rect x="52.3" y="262.5" width="27.8" height="28.3" fill="#FF0000" stroke="rgba(0,0,0,0.13)" stroke-width="1"/>
<rect x="85.1" y="262.5" width="27.8" height="28.3" fill="#FFC000" stroke="rgba(0,0,0,0.13)" stroke-width="1"/>
<rect x="117.9" y="262.5" width="27.8" height="28.3" fill="#FFFF00" stroke="rgba(0,0,0,0.13)" stroke-width="1"/>
<rect x="150.7" y="262.5" width="27.8" height="28.3" fill="#92D050" stroke="rgba(0,0,0,0.13)" stroke-width="1"/>
<rect x="183.5" y="262.5" width="27.8" height="28.3" fill="#00B050" stroke="rgba(0,0,0,0.13)" stroke-width="1"/>
<rect x="216.3" y="262.5" width="27.8" height="28.3" fill="#00B0F0" stroke="rgba(0,0,0,0.13)" stroke-width="1"/>
<rect x="249.1" y="262.5" width="27.8" height="28.3" fill="#0070C0" stroke="rgba(0,0,0,0.13)" stroke-width="1"/>
<rect x="281.9" y="262.5" width="27.8" height="28.3" fill="#002060" stroke="rgba(0,0,0,0.13)" stroke-width="1"/>
<rect x="314.7" y="262.5" width="27.8" height="28.3" fill="#7030A0" stroke="rgba(0,0,0,0.13)" stroke-width="1"/>
</svg>
<div class="a" style="left:85.00px;top:471.46px;font-size:24.5px;line-height:24.5px;color:#222;">Standard Colours</div>
<div class="a" style="left:67px;top:565px;width:361px;height:2.5px;background:#d8d8d8"></div>
<svg width="50" height="46" style="position:absolute;left:98px;top:572px"><g transform="translate(-98,-572)"><path d="M121.5,580 C130.5,580 137.5,586.5 137.5,595 C137.5,604 129,611.2 123.5,611.2 C120.5,611.2 119.8,608.5 120.2,606 C120.8,602.5 123.3,599.5 121.2,596.5 C119.5,594 116.5,594 113.5,595.8 C110.5,597.8 107.5,598.8 106.3,596.5 C105.5,594.5 106,590 108.5,586.5 C111.5,582.5 116,580 121.5,580 Z" fill="#f8f8f8" stroke="#333" stroke-width="1.8"/><circle cx="113" cy="590.2" r="2" fill="#2f8be0"/><circle cx="120.1" cy="586.7" r="2" fill="#12a84a"/><circle cx="127.6" cy="588.5" r="2" fill="#f7923a"/><circle cx="131.2" cy="595.8" r="2" fill="#e93838"/><circle cx="127.5" cy="603.2" r="2" fill="#8a2aa8"/></g></svg>
<div class="a" style="left:147.00px;top:584.00px;font-size:25.4px;line-height:25.4px;color:#222;letter-spacing:0.6px;">More Colours...</div>
</body></html>
